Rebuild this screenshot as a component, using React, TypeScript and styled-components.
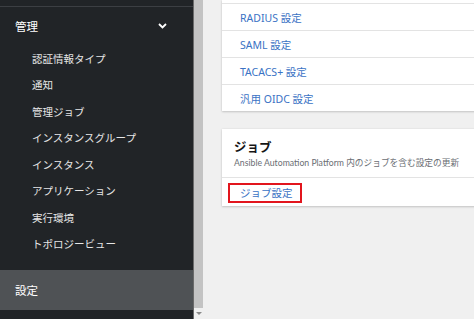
import React from 'react';
import styled, { createGlobalStyle } from 'styled-components';

const GlobalStyle = createGlobalStyle`
  html, body {
    margin: 0;
    padding: 0;
    height: 100%;
    overflow: hidden;
  }
  #root {
    height: 100%;
  }
  body {
    font-family: "Noto Sans", "Noto Sans CJK JP", sans-serif;
  }
`;

const Layout = styled.div`
  display: flex;
  height: 100vh;
  background: #f0f0f0;
`;

const Sidebar = styled.nav`
  width: 193px;
  flex-shrink: 0;
  background: #212427;
  display: flex;
  flex-direction: column;
`;

const TopStrip = styled.div`
  height: 6px;
  border-bottom: 1px solid #3c3f43;
`;

const GroupHeader = styled.div`
  height: 38px;
  display: flex;
  align-items: center;
  justify-content: space-between;
  padding: 0 26px 0 15px;
  color: #ffffff;
  font-size: 11.5px;
`;

const SubList = styled.ul`
  list-style: none;
  margin: 0;
  padding: 0;
`;

const SubItem = styled.li`
  height: 26.5px;
  display: flex;
  align-items: center;
  padding-left: 32px;
  color: #e6e6e6;
  font-size: 10.5px;
`;

const NavItem = styled.div<{ $active?: boolean }>`
  margin-top: 13px;
  height: 40px;
  display: flex;
  align-items: center;
  padding-left: 15px;
  color: #ffffff;
  font-size: 11.5px;
  background: ${(p) => (p.$active ? '#4f5255' : 'transparent')};
`;

const Scrollbar = styled.div`
  width: 10px;
  flex-shrink: 0;
  display: flex;
  flex-direction: column;
  background: #f0f0f0;
  border-left: 1px solid #6a6a6a;
  box-sizing: border-box;
`;

const Thumb = styled.div`
  flex: 1;
  background: #c3c3c3;
`;

const ArrowDown = styled.div`
  height: 11px;
  display: flex;
  align-items: center;
  justify-content: center;
  &::after {
    content: '';
    border-left: 3px solid transparent;
    border-right: 3px solid transparent;
    border-top: 3px solid #8a8a8a;
  }
`;

const Main = styled.main`
  flex: 1;
  padding-left: 19px;
  overflow: hidden;
`;

const Card = styled.section<{ $gap?: number }>`
  background: #ffffff;
  margin-right: -20px;
  margin-top: ${(p) => p.$gap ?? 0}px;
  box-shadow: 0 1px 2px rgba(3, 3, 3, 0.16), 0 0 2px rgba(3, 3, 3, 0.08);
`;

const LinkList = styled.div`
  padding-top: 3px;
`;

const LinkRow = styled.div`
  height: 27px;
  box-sizing: border-box;
  border-top: 1px solid #e3e3e3;
  display: flex;
  align-items: center;
  padding-left: 18px;
  color: #3a72c4;
  font-size: 10.5px;
`;

const CardHeader = styled.div`
  padding: 11px 12px 7px 12px;
  border-bottom: 1px solid #e3e3e3;
`;

const CardTitle = styled.div`
  font-weight: 700;
  font-size: 12.5px;
  line-height: 16px;
  color: #151515;
`;

const CardDesc = styled.div`
  font-family: Lato, "Noto Sans CJK JP", sans-serif;
  font-size: 8.7px;
  line-height: 14px;
  color: #6a6e73;
  white-space: nowrap;
`;

const CardBody = styled.div`
  padding: 2px 0 3px 6px;
`;

const Highlight = styled.span`
  display: inline-flex;
  align-items: center;
  height: 20px;
  box-sizing: border-box;
  border: 2px solid #e2151d;
  padding: 0 7px 0 10px;
  color: #3a72c4;
  font-size: 10.5px;
`;

const Chevron = () => (
  <svg width="9" height="6" viewBox="0 0 9 6">
    <polyline points="1,1 4.5,4.5 8,1" fill="none" stroke="#ffffff" strokeWidth="1.8" />
  </svg>
);

const subItems = [
  '認証情報タイプ',
  '通知',
  '管理ジョブ',
  'インスタンスグループ',
  'インスタンス',
  'アプリケーション',
  '実行環境',
  'トポロジービュー',
];

const authLinks = ['RADIUS 設定', 'SAML 設定', 'TACACS+ 設定', '汎用 OIDC 設定'];

const App: React.FC = () => {
  return (
    <>
      <GlobalStyle />
      <Layout>
        <Sidebar>
          <TopStrip />
          <GroupHeader>
            <span>管理</span>
            <Chevron />
          </GroupHeader>
          <SubList>
            {subItems.map((s) => (
              <SubItem key={s}>{s}</SubItem>
            ))}
          </SubList>
          <NavItem $active>設定</NavItem>
        </Sidebar>
        <Scrollbar>
          <Thumb />
          <ArrowDown />
        </Scrollbar>
        <Main>
          <Card>
            <LinkList>
              {authLinks.map((l) => (
                <LinkRow key={l}>{l}</LinkRow>
              ))}
            </LinkList>
          </Card>
          <Card $gap={18}>
            <CardHeader>
              <CardTitle>ジョブ</CardTitle>
              <CardDesc>Ansible Automation Platform 内のジョブを含む設定の更新</CardDesc>
            </CardHeader>
            <CardBody>
              <Highlight>ジョブ設定</Highlight>
            </CardBody>
          </Card>
        </Main>
      </Layout>
    </>
  );
};

export default App;
